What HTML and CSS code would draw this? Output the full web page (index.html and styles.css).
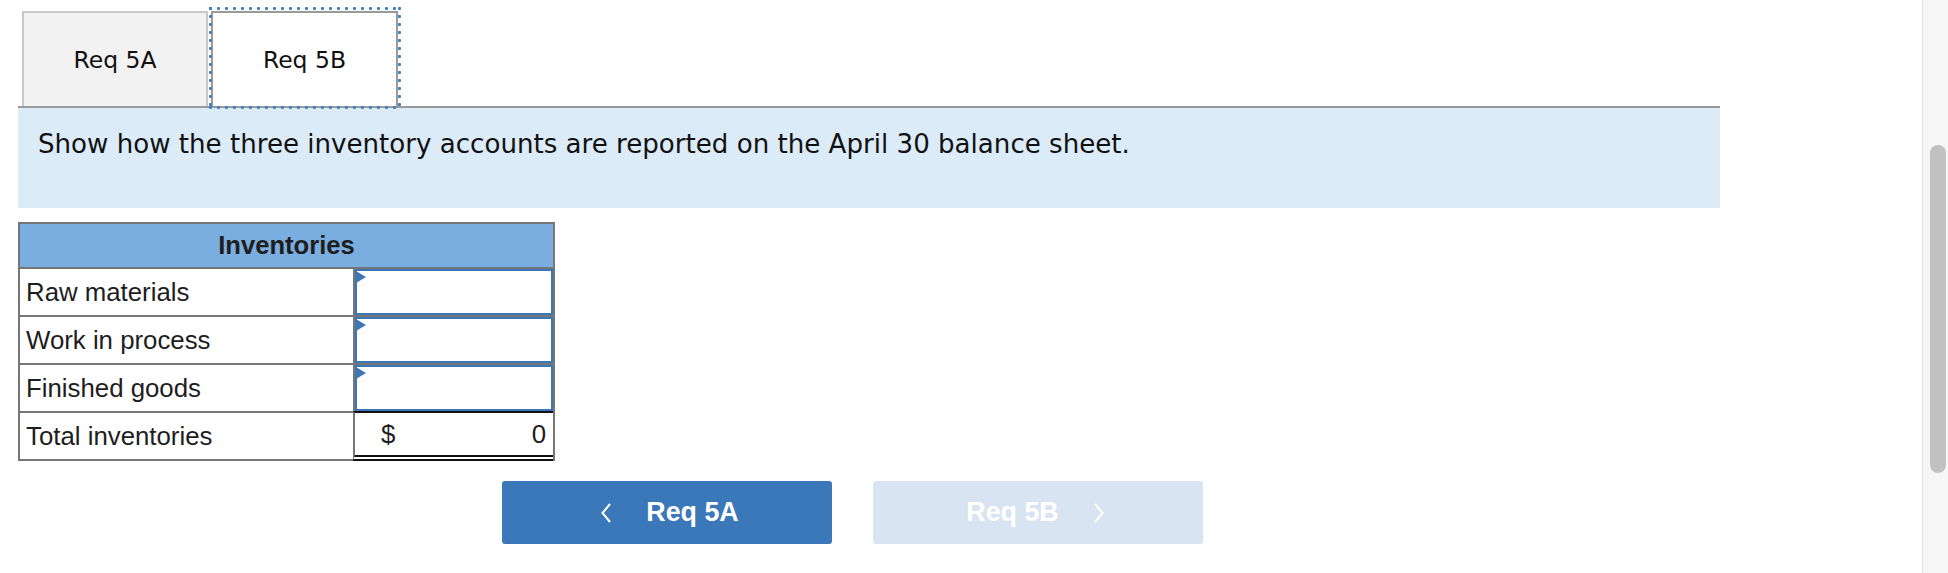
FILE: index.html
```html
<!DOCTYPE html>
<html lang="en">
<head>
<meta charset="utf-8">
<title>Inventories</title>
<link rel="stylesheet" href="styles.css">
</head>
<body>
<main class="page">
  <nav class="tabs">
    <div class="tab">Req 5A</div>
    <div class="tab tab-active">Req 5B</div>
  </nav>
  <section class="prompt">Show how the three inventory accounts are reported on the April 30 balance sheet.</section>
  <div class="inv">
    <div class="inv-head">Inventories</div>
    <div class="inv-row">
      <div class="label">Raw materials</div>
      <div class="val"><div class="inp"></div></div>
    </div>
    <div class="inv-row">
      <div class="label">Work in process</div>
      <div class="val"><div class="inp"></div></div>
    </div>
    <div class="inv-row">
      <div class="label">Finished goods</div>
      <div class="val"><div class="inp"></div></div>
    </div>
    <div class="inv-row">
      <div class="label">Total inventories</div>
      <div class="val total"><span class="cur">$</span><span class="amt">0</span></div>
    </div>
  </div>
  <div class="navs">
    <button class="nbtn nbtn-on"><svg class="chev" width="10" height="20" viewBox="0 0 10 20"><polyline points="9,1 1.5,10 9,19" fill="none" stroke="#fff" stroke-width="2"/></svg><span>Req 5A</span></button>
    <button class="nbtn nbtn-off"><span>Req 5B</span><svg class="chev" width="10" height="20" viewBox="0 0 10 20"><polyline points="1,1 8.5,10 1,19" fill="none" stroke="#fff" stroke-width="2"/></svg></button>
  </div>
</main>
<aside class="sbar"><div class="thumb"></div></aside>
</body>
</html>
```
FILE: styles.css
```css
html, body {
  margin: 0;
  padding: 0;
  background: #fff;
}
body {
  display: flex;
  width: 1948px;
  height: 573px;
  overflow: hidden;
}
.page {
  flex: 1;
  padding-left: 18px;
  font-family: "Liberation Sans", Arial, sans-serif;
}
.tabs {
  width: 1702px;
  box-sizing: border-box;
  display: flex;
  align-items: flex-end;
  padding-top: 11px;
  padding-left: 4px;
  border-bottom: 2px solid #9a9a9a;
}
.tab {
  width: 186px;
  height: 95px;
  box-sizing: border-box;
  display: flex;
  align-items: center;
  justify-content: center;
  font-family: "DejaVu Sans", Verdana, sans-serif;
  font-size: 23.5px;
  color: #111;
  background: #f2f2f2;
  border: 2px solid #c9c9c9;
  border-bottom: none;
}
.tab-active {
  position: relative;
  width: 187px;
  margin-left: 3px;
  background: #fff;
  border-color: #9a9a9a;
}
.tab-active::after {
  content: "";
  position: absolute;
  left: -4.5px;
  top: -6.2px;
  width: 192.7px;
  height: 102.4px;
  pointer-events: none;
  background:
    radial-gradient(circle at 1.5px 1.5px, #3f7fc4 1.3px, transparent 1.8px) 0 0 / 8px 3px repeat-x,
    radial-gradient(circle at 1.5px 1.5px, #3f7fc4 1.3px, transparent 1.8px) 0 100% / 8px 3px repeat-x,
    radial-gradient(circle at 1.5px 1.5px, #3f7fc4 1.3px, transparent 1.8px) 0 0 / 3px 8px repeat-y,
    radial-gradient(circle at 1.5px 1.5px, #3f7fc4 1.3px, transparent 1.8px) 100% 0 / 3px 8px repeat-y;
}
.prompt {
  width: 1702px;
  height: 100px;
  box-sizing: border-box;
  padding: 21px 20px 0;
  background: #dcebf8;
  font-family: "DejaVu Sans", Verdana, sans-serif;
  font-size: 26.1px;
  color: #111;
}
.inv {
  margin-top: 14px;
  width: 537px;
  box-sizing: border-box;
  border: 2px solid #767676;
  font-size: 25.8px;
  color: #1e1e1e;
}
.inv-head {
  height: 43px;
  background: #7aade0;
  font-weight: bold;
  font-size: 25.6px;
  display: flex;
  align-items: center;
  justify-content: center;
  color: #1e1e1e;
}
.inv-row {
  display: grid;
  grid-template-columns: 333px 1fr;
  height: 48px;
  box-sizing: border-box;
  border-top: 2px solid #767676;
}
.label {
  display: flex;
  align-items: center;
  padding-left: 6px;
}
.val {
  position: relative;
  border-left: 2px solid #767676;
}
.inp {
  height: 100%;
  box-sizing: border-box;
  border: 2px solid #3b77b6;
  background: #fff;
  position: relative;
}
.inp::before {
  content: "";
  position: absolute;
  left: -1px;
  top: 0;
  width: 0;
  height: 0;
  border-left: 10px solid #3b77b6;
  border-top: 6px solid transparent;
  border-bottom: 6px solid transparent;
}
.val.total {
  margin-top: -2px;
  margin-bottom: -2px;
  border-top: 2px solid #111;
  border-bottom: 6px double #111;
  display: flex;
  align-items: center;
  justify-content: space-between;
  padding: 0 7px 0 26px;
}
.navs {
  display: flex;
  gap: 41px;
  margin-top: 20px;
  margin-left: 484px;
}
.nbtn {
  width: 330px;
  height: 63px;
  border: none;
  border-radius: 3px;
  display: flex;
  align-items: center;
  justify-content: center;
  gap: 35px;
  font-family: "Liberation Sans", Arial, sans-serif;
  font-weight: bold;
  font-size: 26.8px;
  color: #fff;
  padding: 0;
}
.nbtn-on {
  background: #3b78b9;
  padding-left: 6px;
}
.nbtn-off {
  background: #d8e4f1;
  padding-right: 6px;
}
.chev {
  display: block;
}
.sbar {
  width: 26px;
  height: 573px;
  box-sizing: border-box;
  flex: none;
  background: #f6f6f6;
  border-left: 1px solid #e4e4e4;
  padding-top: 145px;
  padding-left: 7px;
}
.thumb {
  width: 16px;
  height: 328px;
  border-radius: 8px;
  background: #c1c1c1;
}
```
